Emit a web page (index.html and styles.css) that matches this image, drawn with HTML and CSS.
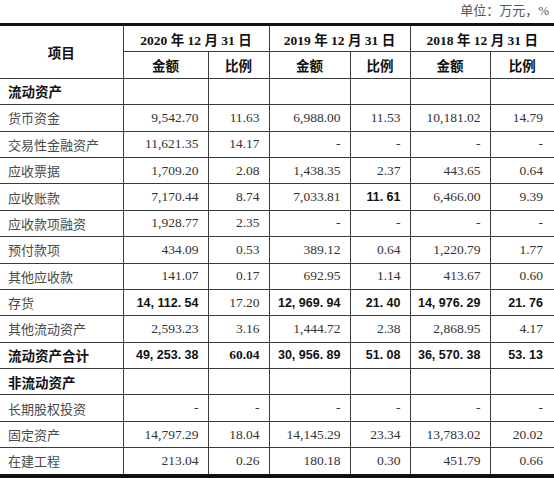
FILE: index.html
```html
<!DOCTYPE html>
<html lang="zh">
<head>
    <meta charset="UTF-8">
    <title>资产构成</title>
    <link rel="stylesheet" href="styles.css">
</head>
<body>
    <div class="unit">单位：万元，%</div>
    <table class="tbl">
        <colgroup>
            <col style="width:123px"><col style="width:85px"><col style="width:61px">
            <col style="width:81px"><col style="width:60px"><col style="width:80px"><col style="width:64px">
        </colgroup>
        <thead>
            <tr>
                <th rowspan="2" class="head-item">项目</th>
                <th colspan="2" class="date">2020 年 12 月 31 日</th>
                <th colspan="2" class="date">2019 年 12 月 31 日</th>
                <th colspan="2" class="date">2018 年 12 月 31 日</th>
            </tr>
            <tr>
                <th>金额</th><th>比例</th>
                <th>金额</th><th>比例</th>
                <th>金额</th><th>比例</th>
            </tr>
        </thead>
        <tbody>
            <tr><td class="sec">流动资产</td><td></td><td></td><td></td><td></td><td></td><td></td></tr>
            <tr><td class="lbl">货币资金</td><td class="num">9,542.70</td><td class="num">11.63</td><td class="num">6,988.00</td><td class="num">11.53</td><td class="num">10,181.02</td><td class="num">14.79</td></tr>
            <tr><td class="lbl">交易性金融资产</td><td class="num">11,621.35</td><td class="num">14.17</td><td class="num">-</td><td class="num">-</td><td class="num">-</td><td class="num">-</td></tr>
            <tr><td class="lbl">应收票据</td><td class="num">1,709.20</td><td class="num">2.08</td><td class="num">1,438.35</td><td class="num">2.37</td><td class="num">443.65</td><td class="num">0.64</td></tr>
            <tr><td class="lbl">应收账款</td><td class="num">7,170.44</td><td class="num">8.74</td><td class="num">7,033.81</td><td class="num b">11. 61</td><td class="num">6,466.00</td><td class="num">9.39</td></tr>
            <tr><td class="lbl">应收款项融资</td><td class="num">1,928.77</td><td class="num">2.35</td><td class="num">-</td><td class="num">-</td><td class="num">-</td><td class="num">-</td></tr>
            <tr><td class="lbl">预付款项</td><td class="num">434.09</td><td class="num">0.53</td><td class="num">389.12</td><td class="num">0.64</td><td class="num">1,220.79</td><td class="num">1.77</td></tr>
            <tr><td class="lbl">其他应收款</td><td class="num">141.07</td><td class="num">0.17</td><td class="num">692.95</td><td class="num">1.14</td><td class="num">413.67</td><td class="num">0.60</td></tr>
            <tr><td class="lbl">存货</td><td class="num b">14, 112. 54</td><td class="num">17.20</td><td class="num b">12, 969. 94</td><td class="num b">21. 40</td><td class="num b">14, 976. 29</td><td class="num b">21. 76</td></tr>
            <tr><td class="lbl">其他流动资产</td><td class="num">2,593.23</td><td class="num">3.16</td><td class="num">1,444.72</td><td class="num">2.38</td><td class="num">2,868.95</td><td class="num">4.17</td></tr>
            <tr><td class="sec">流动资产合计</td><td class="num b">49, 253. 38</td><td class="num bs">60.04</td><td class="num b">30, 956. 89</td><td class="num b">51. 08</td><td class="num b">36, 570. 38</td><td class="num b">53. 13</td></tr>
            <tr><td class="sec">非流动资产</td><td></td><td></td><td></td><td></td><td></td><td></td></tr>
            <tr><td class="lbl">长期股权投资</td><td class="num">-</td><td class="num">-</td><td class="num">-</td><td class="num">-</td><td class="num">-</td><td class="num">-</td></tr>
            <tr><td class="lbl">固定资产</td><td class="num">14,797.29</td><td class="num">18.04</td><td class="num">14,145.29</td><td class="num">23.34</td><td class="num">13,783.02</td><td class="num">20.02</td></tr>
            <tr><td class="lbl">在建工程</td><td class="num">213.04</td><td class="num">0.26</td><td class="num">180.18</td><td class="num">0.30</td><td class="num">451.79</td><td class="num">0.66</td></tr>
        </tbody>
    </table>
</body>
</html>
```

FILE: styles.css
```css
body, html {
    margin: 0;
    padding: 0;
    background-color: #ffffff;
    font-family: "Liberation Serif", "Noto Sans CJK SC", serif;
}
.unit {
    height: 23px;
    line-height: 22px;
    text-align: right;
    padding-right: 5px;
    font-size: 13px;
    color: #555;
    font-family: "Liberation Serif", "Noto Sans CJK SC", serif;
}
.tbl {
    width: 554px;
    table-layout: fixed;
    border-collapse: collapse;
    border-top: 3px solid #111;
    border-bottom: 4px solid #111;
}
.tbl th, .tbl td {
    height: 25.4px;
    padding: 0;
    border: 1px solid #3c3c3c;
    font-size: 13px;
    overflow: hidden;
    white-space: nowrap;
}
.tbl tr > :first-child {
    border-left: none;
}
.tbl tr > :last-child {
    border-right: none;
}
.tbl thead tr:first-child th {
    border-top: none;
}
.tbl tbody tr:last-child td {
    border-bottom: none;
}
.tbl th {
    font-family: "Liberation Serif", "Noto Sans CJK SC", serif;
    font-weight: bold;
    color: #111;
    text-align: center;
    font-size: 13.5px;
}
.head-item {
    font-size: 13.5px;
}
.lbl {
    padding-left: 8px !important;
    color: #4a4a4a;
    font-family: "Noto Sans CJK SC", sans-serif;
    font-weight: normal;
}
.sec {
    padding-left: 8px !important;
    color: #111;
    font-family: "Noto Sans CJK SC", sans-serif;
    font-weight: bold;
    font-size: 13.5px !important;
}
.num {
    text-align: right;
    padding-right: 9px !important;
    color: #333;
    font-size: 13.5px !important;
}
.tbl tr > .num:last-child {
    padding-right: 11px !important;
}
.b {
    font-family: "Liberation Sans", sans-serif;
    font-weight: bold;
    color: #111;
    font-size: 12.5px !important;
}
.bs {
    font-weight: bold;
    color: #111;
}
```
